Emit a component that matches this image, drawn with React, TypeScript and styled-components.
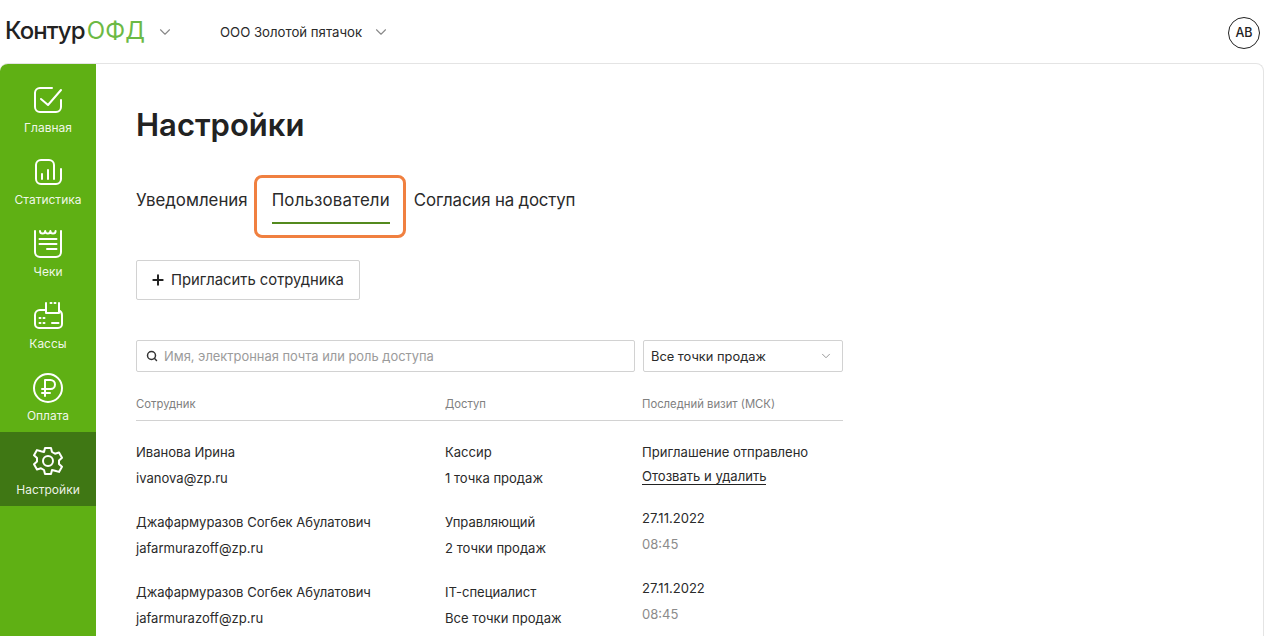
import React from 'react';
import styled, { createGlobalStyle } from 'styled-components';
import { ChevronDown, Plus, Search } from 'lucide-react';

const GlobalStyle = createGlobalStyle`
  html, body {
    margin: 0;
    padding: 0;
    height: 100%;
    overflow: hidden;
    background: #fff;
  }
  body {
    font-family: 'Inter', 'Roboto', 'Liberation Sans', sans-serif;
    color: #222;
  }
  * { box-sizing: border-box; }
`;

const Page = styled.div`
  width: 1264px;
  height: 636px;
  display: flex;
  flex-direction: column;
  overflow: hidden;
`;

const TopBar = styled.header`
  height: 64px;
  flex-shrink: 0;
  display: flex;
  align-items: center;
  padding: 0 4px 0 5px;
`;

const Logo = styled.div`
  display: flex;
  align-items: baseline;
  gap: 2px;
  font-size: 24px;
  line-height: 28px;
  letter-spacing: -0.9px;
  font-weight: 500;
  width: 151px;
  margin-top: -2px;
`;

const LogoProduct = styled.span`
  color: #6cb944;
  font-weight: 400;
  letter-spacing: 0.2px;
`;

const Caret = styled(ChevronDown)`
  color: #8a8a8a;
  flex-shrink: 0;
`;

const Company = styled.div`
  display: flex;
  align-items: center;
  gap: 10px;
  margin-left: 46px;
  margin-top: -1px;
  font-size: 13.2px;
  color: #2a2a2a;
`;

const Avatar = styled.div`
  margin-left: auto;
  margin-top: 1px;
  width: 32px;
  height: 32px;
  border: 1.5px solid #222;
  border-radius: 50%;
  display: flex;
  align-items: center;
  justify-content: center;
  font-size: 12.5px;
  font-weight: 500;
`;

const Body = styled.div`
  flex: 1;
  display: flex;
  min-height: 0;
  border-top: 1px solid #e4e4e4;
  border-right: 1px solid #e4e4e4;
  border-radius: 8px 8px 0 0;
  overflow: hidden;
  margin-top: -1px;
`;

const Sidebar = styled.nav`
  width: 96px;
  flex-shrink: 0;
  background: #5fb014;
  padding-top: 9px;
  margin-top: -1px;
`;

const NavItem = styled.a<{ $active?: boolean }>`
  display: flex;
  flex-direction: column;
  align-items: center;
  height: ${(p) => (p.$active ? '74px' : '72px')};
  padding-top: ${(p) => (p.$active ? '13px' : '12px')};
  background: ${(p) => (p.$active ? '#3f7714' : 'transparent')};
  color: #fff;
  svg { display: block; }
`;

const NavLabel = styled.span<{ $active?: boolean }>`
  margin-top: ${(p) => (p.$active ? '5px' : '4px')};
  font-size: 12px;
  line-height: 16px;
  color: rgba(255, 255, 255, 0.92);
`;

const Content = styled.main`
  flex: 1;
  padding: 41px 0 0 40px;
  min-width: 0;
`;

const Title = styled.h1`
  margin: 0;
  font-size: 31px;
  line-height: 40px;
  font-weight: 600;
  color: #222;
`;

const Tabs = styled.div`
  display: flex;
  align-items: flex-start;
  margin-top: 34px;
  height: 81px;
`;

const Tab = styled.div<{ $highlighted?: boolean; $tracking?: string }>`
  position: relative;
  font-size: 16.85px;
  line-height: 24px;
  letter-spacing: ${(p) => p.$tracking || '0'};
  padding-top: 9px;
  color: #2a2a2a;
  margin-left: ${(p) => (p.$highlighted ? '24px' : '0')};
  margin-right: ${(p) => (p.$highlighted ? '24px' : '0')};
  height: 45px;
  border-bottom: ${(p) => (p.$highlighted ? '2px solid #538a1e' : 'none')};

  ${(p) =>
    p.$highlighted &&
    `&::after {
      content: '';
      position: absolute;
      left: -18px;
      right: -16px;
      top: -4px;
      bottom: -16px;
      border: 3px solid #f08040;
      border-radius: 8px;
    }`}
`;

const InviteButton = styled.button`
  display: inline-flex;
  align-items: center;
  gap: 5px;
  height: 40px;
  width: 224px;
  padding: 0 13px;
  background: #fff;
  border: 1px solid #d2d2d2;
  border-radius: 2px;
  font: inherit;
  font-size: 14.8px;
  color: #2a2a2a;
`;

const Filters = styled.div`
  display: flex;
  gap: 8px;
  width: 707px;
  margin-top: 40px;
`;

const SearchBox = styled.div`
  flex: 1;
  height: 32px;
  display: flex;
  align-items: center;
  gap: 6px;
  padding: 0 9px;
  border: 1px solid #d2d2d2;
  border-radius: 2px;
  font-size: 12.9px;
  color: #9b9b9b;
`;

const SelectBox = styled.div`
  width: 200px;
  height: 32px;
  display: flex;
  align-items: center;
  justify-content: space-between;
  padding: 0 9px 0 7px;
  border: 1px solid #d2d2d2;
  border-radius: 2px;
  font-size: 12.85px;
  color: #2a2a2a;
`;

const Table = styled.div`
  width: 707px;
`;

const Row = styled.div`
  display: grid;
  grid-template-columns: 309px 197px 1fr;
`;

const HeadRow = styled(Row)`
  height: 49px;
  padding-top: 24px;
  border-bottom: 1px solid #d2d2d2;
  font-size: 11.3px;
  line-height: 16px;
  color: #808080;
`;

const DataRow = styled(Row)`
  height: 70px;
`;

const RowsWrap = styled.div`
  padding-top: 22px;
`;

const Cell = styled.div`
  display: flex;
  flex-direction: column;
  gap: 8px;
  font-size: 13.05px;
  line-height: 18px;
  color: #2a2a2a;
`;

const DateCell = styled(Cell)`
  margin-top: -4px;
`;

const Muted = styled.span`
  color: #8b8b8b;
`;

const Revoke = styled.a`
  align-self: flex-start;
  line-height: 16px;
  border-bottom: 1px solid #222;
  margin-top: -1px;
`;

const Stroke = styled.svg.attrs({
  width: 32,
  height: 32,
  viewBox: '0 0 32 32',
  fill: 'none',
  stroke: 'currentColor',
  strokeWidth: 2,
  strokeLinecap: 'round',
  strokeLinejoin: 'round',
})``;

const HomeIcon = () => (
  <Stroke>
    <path d="M20 4H8a5 5 0 0 0-5 5v14a5 5 0 0 0 5 5h16a5 5 0 0 0 5-5v-7" />
    <path d="M9 15l7 6L29 6" />
  </Stroke>
);

const StatsIcon = () => (
  <Stroke>
    <path d="M29 13v10a5 5 0 0 1-5 5H9a5 5 0 0 1-5-5V9a5 5 0 0 1 5-5h8a5 5 0 0 1 5 5v14" />
    <path d="M10 23v-5M16 23v-9" />
  </Stroke>
);

const ReceiptIcon = () => (
  <Stroke>
    <path d="M3 3v21a5 5 0 0 0 5 5h16a5 5 0 0 0 5-5V3" />
    <path d="M8 3a2.6 2.6 0 0 0 5.2 0a2.6 2.6 0 0 0 5.2 0a2.6 2.6 0 0 0 5.2 0" />
    <path d="M7.5 11h17M7.5 16h17M15 21h9.5" />
  </Stroke>
);

const CashboxIcon = () => (
  <Stroke>
    <path d="M14 10H8a5 5 0 0 0-5 5v9a4 4 0 0 0 4 4h19a4 4 0 0 0 4-4V15a5 5 0 0 0-3-4.6" />
    <path d="M14 3v10h13V3" />
    <path d="M18.5 3h1M22.5 3h1" />
    <path d="M7.5 18h1M11.5 18h1M7.5 23h1M11.5 23h1M20 23h6.5" />
  </Stroke>
);

const RubleIcon = () => (
  <Stroke>
    <circle cx="16" cy="16" r="14" />
    <path d="M13 24V8h5.5a4.5 4.5 0 0 1 0 9H10M10 21h8" />
  </Stroke>
);

const GearIcon = () => (
  <Stroke>
    <circle cx="16" cy="16" r="5" />
    <path d="M13 3h6l1 4 3 1.7 4-1.2 3 5.2-3 2.8v3.4l3 2.8-3 5.2-4-1.2L20 25l-1 4h-6l-1-4-3-1.7-4 1.2-3-5.2 3-2.8v-3.4l-3-2.8 3-5.2 4 1.2L12 7z" />
  </Stroke>
);

const navItems = [
  { label: 'Главная', icon: <HomeIcon /> },
  { label: 'Статистика', icon: <StatsIcon /> },
  { label: 'Чеки', icon: <ReceiptIcon /> },
  { label: 'Кассы', icon: <CashboxIcon /> },
  { label: 'Оплата', icon: <RubleIcon /> },
  { label: 'Настройки', icon: <GearIcon />, active: true },
];

const users = [
  { name: 'Иванова Ирина', email: 'ivanova@zp.ru', role: 'Кассир', points: '1 точка продаж', invited: true },
  { name: 'Джафармуразов Согбек Абулатович', email: 'jafarmurazoff@zp.ru', role: 'Управляющий', points: '2 точки продаж', date: '27.11.2022', time: '08:45' },
  { name: 'Джафармуразов Согбек Абулатович', email: 'jafarmurazoff@zp.ru', role: 'IT-специалист', points: 'Все точки продаж', date: '27.11.2022', time: '08:45' },
];

export default function App() {
  return (
    <Page>
      <GlobalStyle />
      <TopBar>
        <Logo>
          Контур<LogoProduct>ОФД</LogoProduct>
        </Logo>
        <Caret size={18} strokeWidth={1.5} />
        <Company>
          ООО Золотой пятачок
          <Caret size={18} strokeWidth={1.5} />
        </Company>
        <Avatar>АВ</Avatar>
      </TopBar>
      <Body>
        <Sidebar>
          {navItems.map((item) => (
            <NavItem key={item.label} $active={item.active}>
              {item.icon}
              <NavLabel $active={item.active}>{item.label}</NavLabel>
            </NavItem>
          ))}
        </Sidebar>
        <Content>
          <Title>Настройки</Title>
          <Tabs>
            <Tab>Уведомления</Tab>
            <Tab $highlighted $tracking="0.17px">Пользователи</Tab>
            <Tab $tracking="-0.17px">Согласия на доступ</Tab>
          </Tabs>
          <InviteButton>
            <Plus size={16} strokeWidth={3} color="#222" />
            Пригласить сотрудника
          </InviteButton>
          <Filters>
            <SearchBox>
              <Search size={12} strokeWidth={3} color="#333" />
              Имя, электронная почта или роль доступа
            </SearchBox>
            <SelectBox>
              Все точки продаж
              <Caret size={14} strokeWidth={1.5} />
            </SelectBox>
          </Filters>
          <Table>
            <HeadRow>
              <div>Сотрудник</div>
              <div>Доступ</div>
              <div>Последний визит (МСК)</div>
            </HeadRow>
            <RowsWrap>
              {users.map((u, i) => (
                <DataRow key={i}>
                  <Cell>
                    <span>{u.name}</span>
                    <span>{u.email}</span>
                  </Cell>
                  <Cell>
                    <span>{u.role}</span>
                    <span>{u.points}</span>
                  </Cell>
                  {u.invited ? (
                    <Cell>
                      <span>Приглашение отправлено</span>
                      <Revoke>Отозвать и удалить</Revoke>
                    </Cell>
                  ) : (
                    <DateCell>
                      <span>{u.date}</span>
                      <Muted>{u.time}</Muted>
                    </DateCell>
                  )}
                </DataRow>
              ))}
            </RowsWrap>
          </Table>
        </Content>
      </Body>
    </Page>
  );
}
